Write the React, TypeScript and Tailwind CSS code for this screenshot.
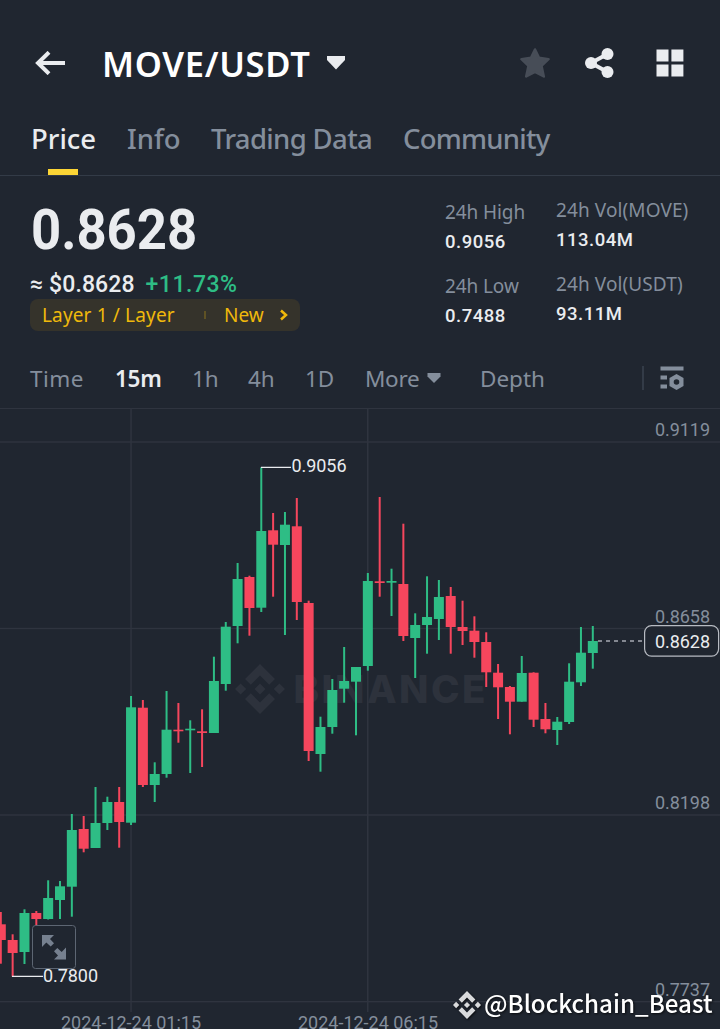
type Candle = [up: number, high: number, top: number, bottom: number, low: number];

// one row per 15m candle, values are in chart space
const candles: Candle[] = [
    [0, 912, 924.3, 940, 963.7],
    [0, 934.3, 940, 953, 976.5],
    [1, 909.3, 913, 952, 964],
    [0, 911, 913, 919, 926],
    [1, 880.3, 898, 919, 919.5],
    [1, 881, 886.3, 900, 919],
    [1, 814, 830, 886.7, 916.7],
    [0, 816, 829, 848.7, 852.3],
    [1, 787, 823, 848, 848],
    [1, 796.7, 802, 823, 830],
    [0, 787, 802, 822, 847.7],
    [1, 696, 707.3, 822.7, 825],
    [0, 700, 707.7, 785, 787],
    [1, 762.3, 774, 785, 802],
    [1, 691, 729.7, 774, 777.7],
    [0, 703, 729.7, 731.3, 742.7],
    [1, 720.3, 728.7, 730.3, 773],
    [0, 709.3, 731.3, 733, 767],
    [1, 656.7, 681, 733, 733],
    [1, 622, 626.7, 684, 690.7],
    [1, 563, 579, 626, 643.3],
    [0, 575.7, 577, 608, 635.7],
    [1, 467.3, 531, 607.7, 612],
    [0, 513, 530.3, 544.7, 596.7],
    [1, 512, 524.7, 545, 635],
    [0, 498, 526.3, 602, 620],
    [0, 600.7, 603, 751, 761],
    [1, 716.7, 727, 754, 771.7],
    [1, 679, 690, 727, 733.7],
    [1, 647, 681, 688.7, 702.7],
    [1, 667, 667, 681.7, 735.3],
    [1, 573, 581, 666, 670.7],
    [0, 497, 581.3, 583, 596.7],
    [1, 568.7, 581, 582.7, 616],
    [0, 523.7, 584, 636, 641],
    [1, 613.3, 625, 638, 678],
    [1, 576.3, 617, 625, 653.7],
    [1, 580, 597, 619, 640],
    [0, 587, 596, 627, 653.7],
    [0, 600.7, 627, 631, 645],
    [0, 616.3, 630.7, 642, 657.7],
    [0, 632.3, 642, 672.3, 687],
    [0, 664, 672.7, 687.3, 719],
    [0, 686, 687, 701.7, 734.3],
    [1, 656, 673, 701.7, 701.7],
    [0, 672.3, 672.7, 719.7, 727],
    [0, 703, 719, 729.3, 733.3],
    [1, 717, 721.7, 730, 745],
    [1, 663.3, 681.7, 722, 724],
    [1, 627, 652.7, 682.3, 686],
    [1, 626, 641, 653, 668.7],
];

const gridRows = [
    { y: 442, label: "0.9119" },
    { y: 628.5, label: "0.8658" },
    { y: 815, label: "0.8198" },
    { y: 1001.7, label: "0.7737" },
];

function BinanceMark({ className }: { className?: string }) {
    return (
        <svg viewBox="0 0 50 50" className={className} fill="currentColor">
            <path d="M25 0 40 15l-5.8 5.8L25 11.6l-9.2 9.2L10 15z" />
            <path d="M25 50 10 35l5.8-5.8 9.2 9.2 9.2-9.2L40 35z" />
            <path d="M25 19.5l5.5 5.5-5.5 5.5-5.5-5.5zM5.6 19.4l5.6 5.6-5.6 5.6L0 25zM44.4 19.4 50 25l-5.6 5.6-5.6-5.6z" />
        </svg>
    );
}

function Header() {
    return (
        <header className="flex h-[126px] items-center pl-[35px] pr-[35px] text-[#eaecef]">
            <svg className="h-6 w-[30px]" viewBox="0 0 30 24" fill="none" stroke="currentColor" strokeWidth="4">
                <path d="M30 12H4M14 1.3 3 12l11 10.7" />
            </svg>
            <h1 className="ml-[37px] mt-px w-[225px] whitespace-nowrap font-['Noto_Sans'] text-[34.5px] font-semibold leading-[48px] tracking-[0.7px] text-white">MOVE/USDT</h1>
            <svg className="h-[14px] w-[18px]" viewBox="0 0 18 14" fill="currentColor">
                <path d="M0 0h18v4L9 13.5 0 4z" />
            </svg>
            <svg className="ml-auto h-[30px] w-[30px] text-[#474d57]" viewBox="0 0 30 30" fill="currentColor" stroke="currentColor" strokeWidth="2.5" strokeLinejoin="round">
                <path d="M15 1.5l4 8.3 9.5 1.4-7 6.6 2.3 10.7-8.8-4.5-8.8 4.5 2.3-10.7-7-6.6 9.5-1.4z" />
            </svg>
            <svg className="ml-[35px] h-[30px] w-[29px]" viewBox="0 0 29 30" fill="currentColor">
                <path d="M6 15 22.5 6M6 15l16.5 9" stroke="currentColor" strokeWidth="4" />
                <circle cx="6" cy="15" r="6" />
                <circle cx="22.5" cy="6" r="6" />
                <circle cx="22.5" cy="24" r="6" />
            </svg>
            <svg className="ml-[42px] h-[28px] w-[29px]" viewBox="0 0 29 28" fill="currentColor">
                <path d="M.5.5h12v12H.5zM15.4.5h12v12h-12zM.5 15.5h12v12H.5zM15.4 15.5h12v12h-12z" />
            </svg>
        </header>
    );
}

function Tabs() {
    return (
        <nav className="flex h-[50px] whitespace-nowrap border-b border-[#333b47] pl-[31px] font-['Noto_Sans'] text-[27.5px] font-medium leading-[26px] text-[#848e9c]">
            <div className="relative w-24 text-[#eaecef]">
                Price
                <span className="absolute left-[17px] top-[43px] h-1.5 w-[30px] bg-[#fcd535]" />
            </div>
            <div className="w-[84px]">Info</div>
            <div className="w-48 tracking-[-0.65px]">Trading Data</div>
            <div className="tracking-[-0.75px]">Community</div>
        </nav>
    );
}

function Stat({ label, value }: { label: string; value: string }) {
    return (
        <div className="h-[74px] whitespace-nowrap">
            <p className="font-['Noto_Sans'] text-[19px] leading-[29px] text-[#848e9c]">{label}</p>
            <p className="font-[Roboto] text-[18.5px] font-medium leading-[30px] tracking-[0.5px] text-[#eaecef]">{value}</p>
        </div>
    );
}

function Summary() {
    return (
        <section className="flex h-[174px] pl-[30px]">
            <div className="w-[415px] whitespace-nowrap">
                <p className="mt-[22px] origin-left scale-x-[0.94] pl-px font-[Roboto] text-[56px] font-bold leading-[64px] text-[#eaecef]">0.8628</p>
                <p className="mt-[7px] flex gap-[11px] font-[Roboto] text-[23px] font-medium leading-8 text-[#eaecef]">
                    <span className="tracking-[0.1px]">≈ $0.8628</span>
                    <span className="tracking-[0.5px] text-[#2ebd85]">+11.73%</span>
                </p>
                <div className="mt-[-2px] flex h-8 w-[270px] items-center rounded-lg bg-[#35332b] pl-3 font-['Noto_Sans'] text-[19px] text-[#f0b90b]">
                    <span className="w-[162px] tracking-[0.15px]">Layer 1 / Layer</span>
                    <span className="h-2 w-0.5 bg-[#5f5224]" />
                    <span className="ml-[18px] w-14">New</span>
                    <svg className="h-3 w-2" viewBox="0 0 8 12" fill="none" stroke="currentColor" strokeWidth="2.5">
                        <path d="M1 1.5 6 6l-5 4.5" />
                    </svg>
                </div>
            </div>
            <div className="mt-[22px] w-[111px] tracking-[-0.1px]">
                <Stat label="24h High" value="0.9056" />
                <Stat label="24h Low" value="0.7488" />
            </div>
            <div className="mt-5 tracking-[0.1px]">
                <Stat label="24h Vol(MOVE)" value="113.04M" />
                <Stat label="24h Vol(USDT)" value="93.11M" />
            </div>
        </section>
    );
}

function Intervals() {
    return (
        <div className="flex h-[58px] items-center whitespace-nowrap pb-0.5 pl-[30px] font-['Noto_Sans'] text-[22.5px] leading-8 text-[#848e9c]">
            <span className="mt-0.5 w-[85px] tracking-[0.5px]">Time</span>
            <span className="mt-0.5 w-[77px] font-semibold tracking-[-0.3px] text-[#eaecef]">15m</span>
            <span className="mt-0.5 w-14">1h</span>
            <span className="mt-0.5 w-[57px]">4h</span>
            <span className="mt-0.5 w-[60px]">1D</span>
            <span className="mt-0.5 w-[62px] tracking-[-0.3px]">More</span>
            <svg className="h-[11px] w-[14px]" viewBox="0 0 14 11" fill="currentColor">
                <path d="M.5 0h13v3.500L7 10 .5 3.500z" />
            </svg>
            <span className="ml-[39px] mt-0.5 w-[162px]">Depth</span>
            <span className="h-6 w-0.5 bg-[#333b47]" />
            <svg className="ml-4 h-6 w-6" viewBox="0 0 24 24" fill="currentColor">
                <path d="M.5.5h23v4H.5zM.5 9.500H7v4H.5zM.5 18.500H7v4H.5z" />
                <path fillRule="evenodd" d="M16.500 8l7 4v8l-7 4-7-4v-8zM16.500 13.200a2.800 2.800 0 1 0 0 5.600 2.800 2.800 0 0 0 0-5.600z" />
            </svg>
        </div>
    );
}

function Chart() {
    return (
        <div className="relative h-[621px] font-[Roboto]">
            <svg className="block h-[621px] w-[720px]" viewBox="0 408 720 621" fontSize="18">
                <g fill="#2f343f">
                    <rect x="0" y="407" width="720" height="2" />
                    <rect x="130.3" y="408" width="1.5" height="604" />
                    <rect x="367" y="408" width="1.5" height="604" />
                    {gridRows.map((row) => (
                        <rect key={row.label} x="0" y={row.y - 0.7} width="720" height="1.4" />
                    ))}
                </g>

                <svg x="235" y="664" width="50" height="50" viewBox="0 0 50 50" overflow="visible">
                    <BinanceMark className="text-[#2d323c]" />
                </svg>
                <text x="293.5" y="703" fontFamily="Inter" fontSize="38.5" fontWeight="800" fill="#2d323c" textLength="192">BINANCE</text>

                {candles.map(([up, high, top, bottom, low], i) => {
                    const x = 0.8 + i * 11.84;
                    return (
                        <g key={i} fill={up ? "#2ebd85" : "#f6465d"}>
                            <rect x={x - 1} y={high} width="2" height={low - high} />
                            <rect x={x - 5} y={top} width="10" height={bottom - top} />
                        </g>
                    );
                })}

                <g fill="#848e9c">
                    {gridRows.map((row) => (
                        <text key={row.label} x="655" y={row.y - 6} textLength="55">{row.label}</text>
                    ))}
                    <text x="61" y="1028.5" textLength="140">2024-12-24 01:15</text>
                    <text x="298" y="1028.5" textLength="140">2024-12-24 06:15</text>
                </g>

                <g fill="#eaecef">
                    <path d="M261 467.3h30M12 976.3h31" stroke="#eaecef" strokeWidth="1.2" />
                    <text x="291.5" y="472" textLength="55">0.9056</text>
                    <text x="43" y="982" textLength="55">0.7800</text>
                </g>

                <path d="M598 641h46" stroke="#a5a9b1" strokeWidth="1.3" strokeDasharray="4 4" />
                <rect x="644.6" y="625.6" width="74" height="30.5" rx="7" fill="#202630" stroke="#b7bbc2" strokeWidth="1.2" />
                <text x="655" y="648" fill="#eaecef" textLength="55">0.8628</text>

                <rect x="32.5" y="925.5" width="43" height="43" rx="3" fill="#202630" stroke="#5d6673" />
                <path fill="#76808f" d="M42 935h12l-4 4 4 4.3-3.300 3.300-4.400-4.200-4.300 4.600zM66 959.500H54l4-4-4-4.300 3.300-3.300 4.400 4.200 4.300-4.600z" />
            </svg>

            <div className="absolute left-[453px] top-[583px] flex items-center text-white drop-shadow-[1px_1px_1px_rgba(0,0,0,0.7)]">
                <BinanceMark className="size-7 text-[#d9dadc]" />
                <span className="mb-1 ml-[3px] whitespace-nowrap font-['Noto_Sans_CJK_SC',sans-serif] text-[24.2px] font-medium leading-6">@Blockchain_Beast</span>
            </div>
        </div>
    );
}

export default function App() {
    return (
        <main className="h-[1029px] w-[720px] overflow-hidden bg-[#202630]">
            <Header />
            <Tabs />
            <Summary />
            <Intervals />
            <Chart />
        </main>
    );
}
